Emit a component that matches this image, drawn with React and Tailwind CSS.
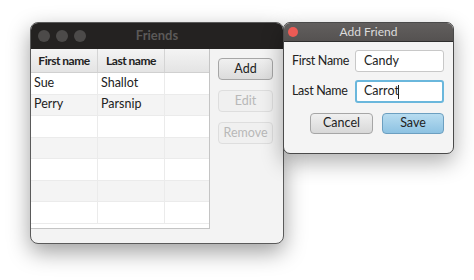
import React from 'react'

const rows = [
  ['Sue', 'Shallot'],
  ['Perry', 'Parsnip'],
  ['', ''],
  ['', ''],
  ['', ''],
  ['', ''],
  ['', ''],
]

function Dot({ color }) {
  return <span className="block w-[12px] h-[12px] rounded-full" style={{ backgroundColor: color }} />
}

function FriendsWindow() {
  return (
    <div className="absolute left-[30px] top-[22px] w-[254px] h-[222px] rounded-[8px] overflow-hidden border border-[#5a5a5a] bg-[#f3f3f3] shadow-[0_8px_22px_rgba(0,0,0,0.38)] flex flex-col">
      <div className="relative h-[26px] shrink-0 bg-[#242221] flex items-center px-[7px] gap-[6px]">
        <Dot color="#4c4a49" />
        <Dot color="#4c4a49" />
        <Dot color="#4c4a49" />
        <div className="absolute inset-0 flex items-center justify-center text-[13px] font-bold text-[#5b5958]">Friends</div>
      </div>
      <div className="flex flex-1">
        <div className="w-[179px] h-[180px] border-r border-b border-[#c4c4c4] bg-white flex flex-col overflow-hidden">
          <div className="h-[24px] shrink-0 flex bg-gradient-to-b from-[#f4f4f4] to-[#e4e4e4] border-b border-[#d0d0d0] text-[12px] font-bold text-[#222] tracking-[-0.5px]">
            <div className="w-[67px] flex items-center justify-center border-r border-[#d4d4d4]">First name</div>
            <div className="w-[67px] flex items-center justify-center border-r border-[#d4d4d4]">Last name</div>
            <div className="flex-1" />
          </div>
          {rows.map((r, i) => (
            <div key={i} className={`h-[21.5px] shrink-0 flex text-[12.5px] text-[#222] border-b border-[#ebebeb] ${i % 2 ? 'bg-[#f4f4f4]' : 'bg-white'}`}>
              <div className="w-[67px] flex items-center pl-[3px] border-r border-[#ebebeb]">{r[0]}</div>
              <div className="w-[67px] flex items-center pl-[3px] border-r border-[#ebebeb]">{r[1]}</div>
              <div className="flex-1" />
            </div>
          ))}
        </div>
        <div className="flex flex-col gap-[10px] pt-[9px] pl-[8px]">
          <button className="w-[55px] h-[22px] rounded-[4px] border border-[#a6a6a6] bg-gradient-to-b from-[#f0f0f0] to-[#dcdcdc] text-[12.5px] text-[#222]">Add</button>
          <button className="w-[55px] h-[22px] rounded-[4px] border border-[#dedede] bg-[#f0f0f0] text-[12.5px] text-[#b8b8b8]">Edit</button>
          <button className="w-[55px] h-[22px] rounded-[4px] border border-[#dedede] bg-[#f0f0f0] text-[12.5px] text-[#b8b8b8]">Remove</button>
        </div>
      </div>
    </div>
  )
}

function AddFriendDialog() {
  return (
    <div className="absolute left-[283px] top-[22px] w-[171px] h-[132px] rounded-[7px] overflow-hidden border border-[#4a4a4a] bg-[#f4f4f4] shadow-[0_8px_22px_rgba(0,0,0,0.32)] flex flex-col">
      <div className="relative h-[19px] shrink-0 bg-gradient-to-b from-[#625f5e] to-[#555251] border-b border-[#2e2e2e] flex items-center px-[4px]">
        <span className="block w-[10px] h-[10px] rounded-full bg-[#ec5b55]" />
        <div className="absolute inset-0 flex items-center justify-center text-[12px] text-[#dcdcdc]">Add Friend</div>
      </div>
      <div className="flex flex-col pl-[8px] pr-[9px] pt-[8px] gap-[8px] text-[12.5px] text-[#222]">
        <div className="flex items-center justify-between">
          <span className="tracking-[-0.3px]">First Name</span>
          <div className="w-[89px] h-[22px] rounded-[3px] border border-[#c8c8c8] bg-white flex items-center pl-[8px]">Candy</div>
        </div>
        <div className="flex items-center justify-between">
          <span className="tracking-[-0.3px]">Last Name</span>
          <div className="w-[89px] h-[23px] rounded-[3px] border-2 border-[#6ab7dc] bg-white flex items-center pl-[7px]">
            Carrot<span className="inline-block w-[1px] h-[14px] bg-[#222] -ml-[1px]" />
          </div>
        </div>
        <div className="flex justify-end gap-[9px] mt-[2px]">
          <button className="w-[63px] h-[21px] rounded-[4px] border border-[#a6a6a6] bg-gradient-to-b from-[#f0f0f0] to-[#d8d8d8]">Cancel</button>
          <button className="w-[62px] h-[21px] rounded-[4px] border border-[#6c9fc0] bg-gradient-to-b from-[#b7dcf0] to-[#8dc2e2]">Save</button>
        </div>
      </div>
    </div>
  )
}

export default function App() {
  return (
    <div className="relative w-[474px] h-[280px] bg-white overflow-hidden" style={{ fontFamily: 'Lato, "Open Sans", sans-serif' }}>
      <FriendsWindow />
      <AddFriendDialog />
    </div>
  )
}
